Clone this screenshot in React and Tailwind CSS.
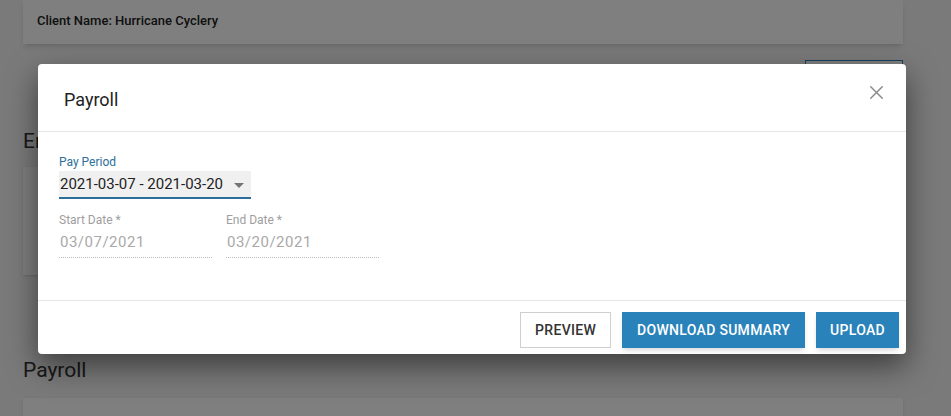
import { HiXMark } from 'react-icons/hi2';

function Background() {
  return (
    <div className="absolute inset-0 bg-[#f4f4f4] px-[23px]" style={{ width: 951 }}>
      <div className="w-[880px] h-[44px] bg-white shadow-md flex items-end pb-[14px] pl-[14px]">
        <span className="text-[13px] font-medium text-[#222]">Client Name: Hurricane Cyclery</span>
      </div>
      <div className="flex justify-end mt-[16px] w-[880px]">
        <div className="w-[98px] h-[34px] border border-[#2a84bd] bg-white" />
      </div>
      <div className="text-[21px] text-[#333] mt-[37px] leading-none">Employees</div>
      <div className="w-[880px] h-[108px] bg-white shadow mt-[15px]" />
      <div className="text-[21px] text-[#333] mt-[85px] leading-none">Payroll</div>
      <div className="w-[880px] h-[60px] bg-white shadow mt-[17px]" />
    </div>
  );
}

function DateField({ label, value, width }) {
  return (
    <div className={width}>
      <div className="text-[12px] text-[#9e9e9e] leading-none">{label}</div>
      <div className="text-[15px] text-[#a9a9a9] tracking-[0.5px] mt-[5px] pb-[3px] pl-[1px] border-b border-dotted border-[#bdbdbd]">
        {value}
      </div>
    </div>
  );
}

export default function App() {
  return (
    <div className="relative w-[951px] h-[416px] overflow-hidden font-['Roboto',sans-serif]">
      <Background />
      <div className="absolute inset-0 bg-black/50" />

      <div className="absolute left-[38px] top-[64px] w-[868px] h-[290px] bg-white rounded-[4px] shadow-[0_12px_30px_rgba(0,0,0,0.5)] flex flex-col">
        <div className="h-[68px] flex items-center justify-between pl-[26px] pr-[18px] border-b border-[#e6e6e6]">
          <h2 className="text-[18px] text-[#222] mt-[4px]">Payroll</h2>
          <HiXMark size={23} className="text-[#8a8a8a] -mt-[10px]" />
        </div>

        <div className="flex-1 pl-[21px] pt-[24px]">
          <div className="text-[12px] text-[#2c6e9b] leading-none">Pay Period</div>
          <div className="mt-[3px] w-[192px] h-[28px] bg-[#f0f0f0] border-b-2 border-[#2c6e9b] flex items-center justify-between pl-[1px] pr-[7px]">
            <span className="text-[15px] text-[#222]">2021-03-07 - 2021-03-20</span>
            <svg width="10" height="5" viewBox="0 0 10 5" className="mt-[2px]">
              <path d="M0 0 L10 0 L5 5 Z" fill="#757575" />
            </svg>
          </div>
          <div className="flex gap-[14px] mt-[15px]">
            <DateField label="Start Date *" value="03/07/2021" width="w-[153px]" />
            <DateField label="End Date *" value="03/20/2021" width="w-[153px]" />
          </div>
        </div>

        <div className="h-[54px] border-t border-[#e6e6e6] flex justify-end items-start gap-[11px] pt-[11px] pr-[7px]">
          <button className="h-[36px] px-[14px] border border-[#cfcfcf] bg-white text-[14px] tracking-[0.3px] font-medium text-[#333]">
            PREVIEW
          </button>
          <button className="h-[36px] px-[15px] bg-[#2a82bb] text-[14px] tracking-[0.3px] font-medium text-white shadow-md">
            DOWNLOAD SUMMARY
          </button>
          <button className="h-[36px] px-[14px] bg-[#2a82bb] text-[14px] tracking-[0.3px] font-medium text-white shadow-md">
            UPLOAD
          </button>
        </div>
      </div>
    </div>
  );
}
